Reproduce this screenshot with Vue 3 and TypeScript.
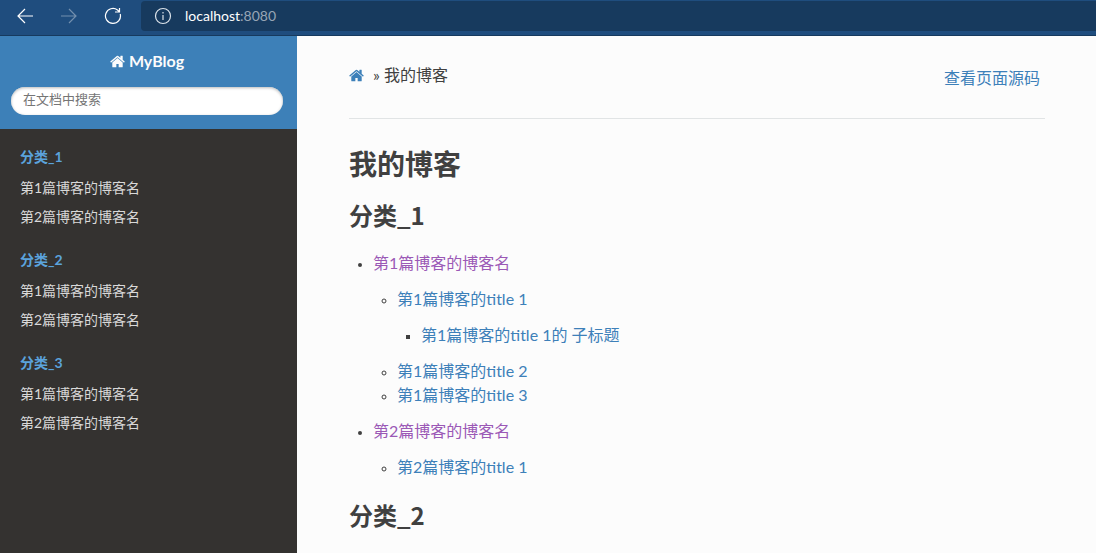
<script setup lang="ts">
interface Entry {
  text: string
  visited?: boolean
  children?: Entry[]
}

const categories: string[] = ['分类_1', '分类_2', '分类_3']
const posts: string[] = ['第1篇博客的博客名', '第2篇博客的博客名']

const entries: Entry[] = [
  {
    text: '第1篇博客的博客名',
    visited: true,
    children: [
      { text: '第1篇博客的title 1', children: [{ text: '第1篇博客的title 1的 子标题' }] },
      { text: '第1篇博客的title 2' },
      { text: '第1篇博客的title 3' },
    ],
  },
  {
    text: '第2篇博客的博客名',
    visited: true,
    children: [{ text: '第2篇博客的title 1' }],
  },
]

const homePath =
  'M1408 992v480q0 26-19 45t-45 19H960v-384H704v384H320q-26 0-45-19t-19-45V992q0-1 .5-3t.5-3l575-474 575 474q1 2 1 6zm223-69l-62 74q-8 9-21 11h-3q-13 0-21-7L832 424l-692 577q-12 8-24 7-13-2-21-11l-62-74q-8-10-7-23.500t11-21.500l719-599q32-26 76-26t76 26l244 204V288q0-14 9-23t23-9h192q14 0 23 9t9 23v408l219 182q10 8 11 21.500t-7 23.500z'
</script>

<template>
  <div class="window">
    <header class="toolbar">
      <div class="nav-buttons">
        <button type="button" aria-label="后退">
          <svg width="18" height="18" viewBox="0 0 18 18"><path d="M17 9H2M9 2L2 9l7 7" /></svg>
        </button>
        <button type="button" aria-label="前进" class="dim">
          <svg width="18" height="18" viewBox="0 0 18 18"><path d="M1 9h15M9 2l7 7-7 7" /></svg>
        </button>
        <button type="button" aria-label="刷新">
          <svg width="18" height="18" viewBox="0 0 18 18"><path d="M16.200 7A7.500 7.500 0 1 1 13.500 3L15.500 4.800M15.500 1v4h-4.500" /></svg>
        </button>
      </div>
      <div class="address">
        <svg width="18" height="18" viewBox="0 0 18 18">
          <circle cx="9" cy="9" r="7.500" />
          <path d="M9 8v5M9 5v1.500" />
        </svg>
        <span class="url">localhost<span class="port">:8080</span></span>
      </div>
    </header>

    <div class="page">
      <nav class="sidebar">
        <div class="search-area">
          <a class="brand" href="#">
            <svg class="home" width="15" height="14" viewBox="0 128 1664 1408"><path :d="homePath" /></svg>
            MyBlog
          </a>
          <input type="text" placeholder="在文档中搜索" aria-label="在文档中搜索" />
        </div>
        <div class="menu">
          <section v-for="category in categories" :key="category">
            <p class="caption">{{ category }}</p>
            <ul>
              <li v-for="post in posts" :key="post"><a href="#">{{ post }}</a></li>
            </ul>
          </section>
        </div>
      </nav>

      <main class="content">
        <div class="breadcrumbs">
          <div class="trail">
            <a href="#" aria-label="首页">
              <svg class="home" width="15" height="14" viewBox="0 128 1664 1408"><path :d="homePath" /></svg>
            </a>
            <span>» 我的博客</span>
          </div>
          <a class="source" href="#">查看页面源码</a>
        </div>
        <hr />
        <h1>我的博客</h1>
        <h2>分类_1</h2>
        <ul class="toc">
          <li v-for="entry in entries" :key="entry.text">
            <a href="#" :class="{ visited: entry.visited }">{{ entry.text }}</a>
            <ul v-if="entry.children">
              <li v-for="child in entry.children" :key="child.text">
                <a href="#">{{ child.text }}</a>
                <ul v-if="child.children">
                  <li v-for="leaf in child.children" :key="leaf.text">
                    <a href="#">{{ leaf.text }}</a>
                  </li>
                </ul>
              </li>
            </ul>
          </li>
        </ul>
        <h2>分类_2</h2>
      </main>
    </div>
  </div>
</template>

<style>
body {
  margin: 0;
}
</style>

<style scoped>
* {
  box-sizing: border-box;
}

.window {
  display: flex;
  flex-direction: column;
  height: 100vh;
  overflow: hidden;
  background: #fcfcfc;
  color: #404040;
  font: 16px/24px Lato, "Noto Sans CJK SC", sans-serif;
}

a {
  color: #3d80b9;
  text-decoration: none;
}

ul {
  margin: 0;
  padding: 0;
}

.toolbar {
  display: flex;
  flex: none;
  height: 36px;
  padding-left: 16px;
  background: #1f4d7e;
  border-bottom: 1px solid #173a5e;
}

.toolbar svg {
  display: block;
  fill: none;
  stroke: currentColor;
  stroke-width: 1.2;
}

.nav-buttons {
  display: flex;
  align-items: center;
  gap: 26px;
  width: 125px;
  padding-bottom: 4px;
}

.nav-buttons button {
  padding: 0;
  border: 0;
  background: none;
  color: #fff;
}

.nav-buttons .dim {
  color: #7390ae;
}

.address {
  display: flex;
  flex: 1;
  align-items: center;
  gap: 13px;
  height: 30px;
  margin-top: 1px;
  padding-left: 13px;
  border-radius: 4px 0 0 4px;
  background: #173a5e;
  color: #dce3ea;
}

.url {
  color: #fff;
  font-size: 14px;
}

.port {
  color: #97a5b5;
}

.page {
  display: flex;
  flex: 1;
  min-height: 0;
}

.sidebar {
  flex: none;
  width: 297px;
  background: #343230;
}

.search-area {
  display: flex;
  flex-direction: column;
  gap: 14px;
  padding: 13px 14px 14px 11px;
  background: #3d80b8;
}

.brand {
  display: flex;
  align-items: center;
  justify-content: center;
  gap: 4px;
  color: #fcfcfc;
  font-weight: 700;
}

.home {
  display: block;
  fill: currentColor;
}

.search-area input {
  width: 100%;
  height: 28px;
  padding: 0 12px 4px;
  border: 0;
  border-radius: 14px;
  background: #fff;
  box-shadow: inset 0 1px 3px #bbb;
  font: 13px/20px Lato, "Noto Sans CJK SC", sans-serif;
}

.search-area input::placeholder {
  color: #757575;
}

.menu {
  padding: 12px 20px;
  font-size: 14px;
}

.menu section {
  margin-bottom: 13px;
}

.caption {
  margin: 0;
  color: #5ba3dc;
  font-weight: 700;
  line-height: 32px;
}

.menu li {
  line-height: 29px;
  list-style: none;
}

.menu a {
  color: #d9d9d9;
}

.content {
  flex: 1;
  min-width: 0;
  padding: 27px 51px 0 52px;
}

.breadcrumbs {
  display: flex;
  justify-content: space-between;
}

.trail {
  display: flex;
  align-items: center;
  gap: 9px;
  height: 24px;
}

.source {
  padding: 3px 5px 0 0;
}

hr {
  margin: 28px 0 24px;
  border: 0;
  border-top: 1px solid #e1e4e5;
}

h1,
h2 {
  margin: 0;
  font-family: "Noto Sans CJK SC", sans-serif;
  font-weight: 700;
}

h1 {
  margin-bottom: 16px;
  font-size: 28px;
  line-height: 40px;
}

h2 {
  font-size: 24px;
  line-height: 32px;
}

.toc {
  margin: 20px 0;
}

.toc li {
  margin-left: 24px;
  list-style: disc;
}

.toc li::marker {
  font-size: 12px;
}

.toc li li {
  list-style: circle;
}

.toc li li li {
  list-style: square;
}

.toc ul {
  margin: 12px 0;
}

.toc .visited {
  color: #9b59b6;
}
</style>
